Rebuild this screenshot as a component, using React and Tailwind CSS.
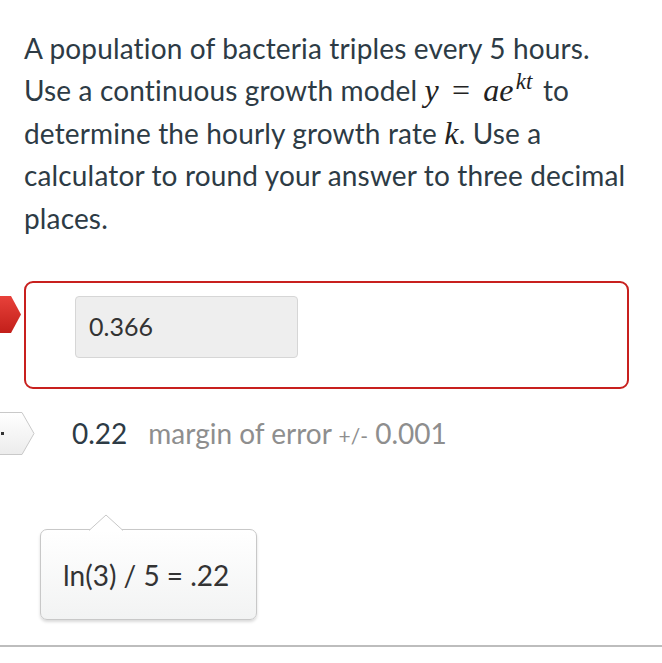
import React from 'react';

const Math = ({ children }) => (
  <span className="italic text-[32px] leading-none text-[#222]" style={{ fontFamily: '"Liberation Serif", "DejaVu Serif", serif' }}>
    {children}
  </span>
);

const App = () => {
  return (
    <div className="relative w-[662px] h-[663px] bg-white text-[#2d3b45] overflow-hidden font-['Lato',sans-serif]">
      {/* Question */}
      <div className="pt-[27px] pl-6 pr-2">
        <p className="text-[28px] leading-[42.4px] tracking-[0.15px]">
          A population of bacteria triples every 5 hours.
          <br />
          Use a continuous growth model{' '}
          <Math>
            y<span className="not-italic mx-[13px]">=</span>ae<sup className="text-[23px] ml-[2px] mr-[3px] relative -top-[12px]">kt</sup>
          </Math>{' '}
          to
          <br />
          determine the hourly growth rate <Math>k</Math>. Use a
          <br />
          calculator to round your answer to three decimal
          <br />
          places.
        </p>
      </div>

      {/* Your answer */}
      <div className="relative mt-[42px] pl-6">
        <div className="absolute left-0 top-[15px] w-[21px] h-[37px]">
          <svg width="21" height="37" viewBox="0 0 21 37">
            <defs>
              <linearGradient id="red" x1="0" y1="0" x2="0" y2="1">
                <stop offset="0" stopColor="#e8413a" />
                <stop offset="1" stopColor="#c21f1a" />
              </linearGradient>
            </defs>
            <path d="M0 0 H11 L21 18.5 L11 37 H0 Z" fill="url(#red)" />
          </svg>
        </div>
        <div className="w-[605px] h-[108px] border-2 border-[#c8201e] rounded-[9px] pl-[49px] pt-[13px]">
          <div className="w-[223px] h-[62px] bg-[#eeeeee] border border-[#d6d6d6] rounded-[4px] flex items-center pl-[13px]">
            <span className="text-[25px] text-[#333]">0.366</span>
          </div>
        </div>
      </div>

      {/* Correct answer */}
      <div className="relative mt-[22px] h-[44px] flex items-center pl-[72px]">
        <div className="absolute left-0 top-[1px] w-[35px] h-[43px]">
          <svg width="35" height="43" viewBox="0 0 35 43">
            <defs>
              <linearGradient id="gray" x1="0" y1="0" x2="0" y2="1">
                <stop offset="0" stopColor="#ffffff" />
                <stop offset="1" stopColor="#ececec" />
              </linearGradient>
            </defs>
            <path d="M-1 0.5 H22 L34 21.5 L22 42.5 H-1 Z" fill="url(#gray)" stroke="#c9c9c9" />
            <rect x="1" y="20" width="3" height="3" fill="#333" />
          </svg>
        </div>
        <span className="text-[28px] text-[#2d3b45]">0.22</span>
        <span className="ml-[21px] text-[28px] text-[#8e8e8e]">
          margin of error <span className="text-[21px]">+/-</span> 0.001
        </span>
      </div>

      {/* Comment bubble */}
      <div className="relative mt-[74px] ml-10 w-[217px] h-[91px] rounded-[7px] border border-[#c8c8c8] bg-gradient-to-b from-white to-[#f2f3f3] shadow-[0_2px_3px_rgba(0,0,0,0.15)] flex items-center pl-[22px]">
        <svg className="absolute -top-[16px] left-[48px]" width="34" height="17" viewBox="0 0 34 17">
          <path d="M0 16.5 L17 1 L34 16.5" fill="#fff" stroke="#c8c8c8" />
          <rect x="1" y="16" width="32" height="2" fill="#fff" />
        </svg>
        <span className="text-[28px] text-[#333]">ln(3) / 5 = .22</span>
      </div>

      {/* Divider */}
      <div className="absolute left-0 right-0 top-[645px] h-[2px] bg-[#bdbdbd]" />
    </div>
  );
};

export default App;
